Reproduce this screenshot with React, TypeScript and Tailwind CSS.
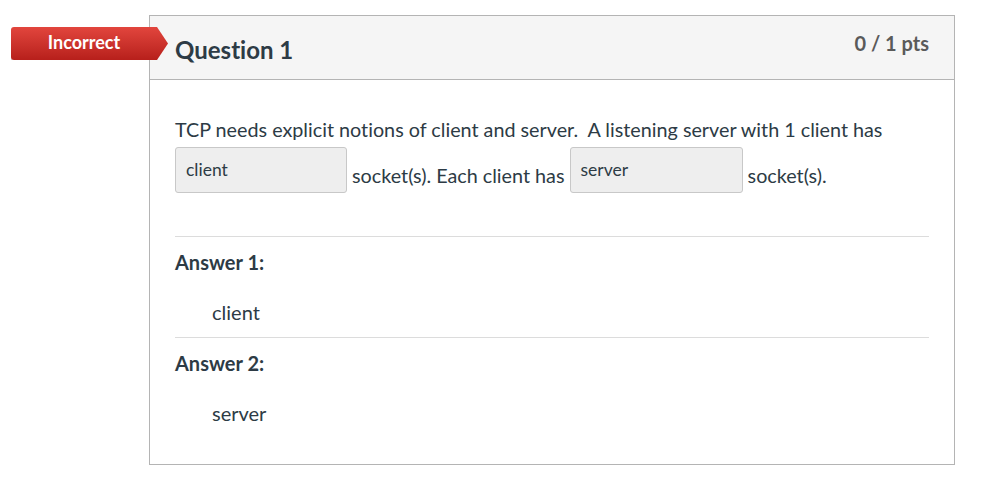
export default function App() {
  return (
    <div className="min-h-[490px] bg-white pl-[149px] pt-[15px] font-['Lato','Liberation_Sans',sans-serif] text-[#2d3b45] [font-variant-ligatures:none]">
      <div className="relative w-[806px] border border-[#b4b4b4]">
        {/* Result ribbon */}
        <div className="absolute left-[-139px] top-[11px] h-[33px] w-[157px] rounded-l-[3px] bg-gradient-to-b from-[#e2453d] to-[#b71f1b] pr-[11px] text-center text-[18px] font-bold leading-[31px] text-white shadow-[0_1px_1px_rgba(0,0,0,0.35)] [clip-path:polygon(0_0,146px_0,157px_50%,146px_100%,0_100%)]">
          Incorrect
        </div>

        {/* Header */}
        <div className="flex h-[64px] items-start justify-between border-b border-[#b4b4b4] bg-[#f5f5f5] pl-[25px] pr-[25px]">
          <span className="pt-[19px] text-[24px] font-bold leading-[30px]">Question 1</span>
          <span className="pt-[12px] text-[20px] font-bold leading-[30px] text-[#5a5a5a]">0 / 1 pts</span>
        </div>

        {/* Question text */}
        <div className="px-[25px] pb-[36px] pt-[35px]">
          <div className="text-[19.75px] leading-[30px]">
            TCP needs explicit notions of client and server.&nbsp; A listening server with 1 client has{" "}
            <span className="mt-[2px] inline-block h-[46px] w-[172px] overflow-hidden rounded-[3px] border border-[#c8c8c8] bg-[#eeeeee] px-[10px] pt-[11px] align-[-10px] text-[17.5px] leading-[22px]">
              client
            </span>{" "}
            socket(s). Each client has{" "}
            <span className="mt-[2px] inline-block h-[46px] w-[173px] overflow-hidden rounded-[3px] border border-[#c8c8c8] bg-[#eeeeee] px-[10px] pt-[11px] align-[-10px] text-[17.5px] leading-[22px]">
              server
            </span>{" "}
            socket(s).
          </div>

          <div className="mt-[43px] border-t border-[#dcdcdc]">
            <div className="mt-[10px] text-[20px] font-bold leading-[30px]">Answer 1:</div>
            <div className="mt-[20px] pl-[37px] text-[20px] leading-[30px]">client</div>
          </div>
          <div className="mt-[10px] border-t border-[#dcdcdc]">
            <div className="mt-[10px] text-[20px] font-bold leading-[30px]">Answer 2:</div>
            <div className="mt-[20px] pl-[37px] text-[20px] leading-[30px]">server</div>
          </div>
        </div>
      </div>
    </div>
  )
}
